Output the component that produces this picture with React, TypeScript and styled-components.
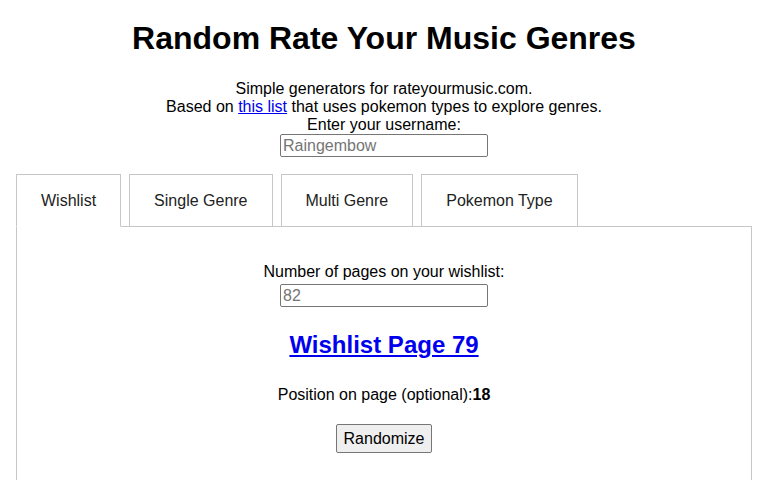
import React from "react";
import styled, { createGlobalStyle } from "styled-components";

const Global = createGlobalStyle`
  body {
    margin: 8px;
    font-family: "Liberation Sans", Arial, sans-serif;
    font-size: 16px;
    color: #000;
    background: #fff;
  }
`;

const Title = styled.h1`
  font-size: 32px;
  font-weight: bold;
  text-align: center;
  margin: 12px 0 23px;
  line-height: 37px;
`;

const Intro = styled.div`
  text-align: center;
  line-height: 18px;
`;

const Line = styled.div``;

const Link = styled.a`
  color: #0000ee;
  text-decoration: underline;
`;

const TextInput = styled.input<{ $gap?: number }>`
  box-sizing: border-box;
  width: 208px;
  height: 23px;
  font-family: "Liberation Sans", Arial, sans-serif;
  font-size: 16px;
  padding: 1px 2px;
  border: 1px solid #767676;
  border-radius: 2px;
  margin: ${(p) => p.$gap ?? 0}px 0 0;
  &::placeholder {
    color: #757575;
  }
`;

const Tabs = styled.div`
  margin: 17px 8px 0;
`;

const TabBar = styled.div`
  display: flex;
  gap: 8px;
  position: relative;
  z-index: 1;
`;

const Tab = styled.div<{ $active?: boolean }>`
  box-sizing: border-box;
  height: 53px;
  padding: 1px 24px 0;
  display: flex;
  align-items: center;
  border: 1px solid #c6c6c6;
  border-bottom: ${(p) => (p.$active ? "1px solid #fff" : "1px solid #c6c6c6")};
  background: #fff;
  color: #222;
  margin-bottom: -1px;
`;

const Panel = styled.div`
  border: 1px solid #c6c6c6;
  padding: 36px 0 40px;
  text-align: center;
  line-height: 18px;
`;

const BigLink = styled.a`
  display: block;
  width: fit-content;
  margin: 24px auto 0;
  font-size: 24px;
  font-weight: bold;
  line-height: 28px;
  color: #0000ee;
  text-decoration: underline;
`;

const Position = styled.p`
  margin: 27px 0 0;
`;

const Button = styled.button`
  margin-top: 20px;
  font-family: "Liberation Sans", Arial, sans-serif;
  font-size: 16px;
  height: 29px;
  padding: 1px 7px;
  border: 1px solid #767676;
  border-radius: 2px;
  background: #efefef;
  color: #000;
`;

export default function App() {
  return (
    <>
      <Global />
      <Title>Random Rate Your Music Genres</Title>
      <Intro>
        <Line>Simple generators for rateyourmusic.com.</Line>
        <Line>
          Based on <Link href="#">this list</Link> that uses pokemon types to explore genres.
        </Line>
        <Line>Enter your username:</Line>
        <TextInput placeholder="Raingembow" />
      </Intro>
      <Tabs>
        <TabBar>
          <Tab $active>Wishlist</Tab>
          <Tab>Single Genre</Tab>
          <Tab>Multi Genre</Tab>
          <Tab>Pokemon Type</Tab>
        </TabBar>
        <Panel>
          <Line>Number of pages on your wishlist:</Line>
          <TextInput $gap={3} placeholder="82" />
          <BigLink href="#">Wishlist Page 79</BigLink>
          <Position>
            Position on page (optional):<b>18</b>
          </Position>
          <Button>Randomize</Button>
        </Panel>
      </Tabs>
    </>
  );
}
